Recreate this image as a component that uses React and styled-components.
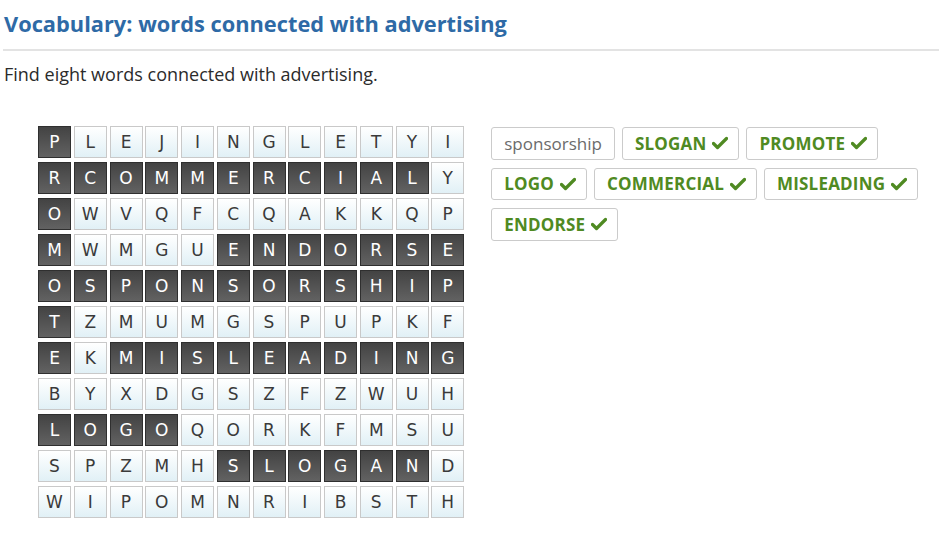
import styled, { createGlobalStyle } from "styled-components";

const Global = createGlobalStyle`
    body {
        margin: 0;
        background: #fff;
        font-family: "Open Sans", "Liberation Sans", sans-serif;
    }
`
const Page = styled.div`
    padding: 0 1px 0 3px;
`
const Titulo = styled.h2`
    color: #2e6aa6;
    font-size: 21.8px;
    font-weight: 700;
    margin: 0;
    padding: 9px 1px 11px;
    line-height: 29px;
    border-bottom: 2px solid #e3e3e3;
`
const Instrucao = styled.p`
    color: #2b2b2b;
    font-size: 18px;
    margin: 10px 0 0 1px;
    line-height: 26px;
`
const Area = styled.div`
    display: flex;
    align-items: flex-start;
    gap: 27px;
    margin-top: 39px;
    padding-left: 35px;
`
const Grade = styled.div`
    display: grid;
    grid-template-columns: repeat(12, 33px);
    grid-auto-rows: 32px;
    column-gap: 2.75px;
    row-gap: 4px;
`
const Celula = styled.div`
    box-sizing: border-box;
    display: flex;
    align-items: center;
    justify-content: center;
    font-family: "DejaVu Sans", "Open Sans", sans-serif;
    font-size: 17px;
    border: 1px solid ${p => p.$marcada ? "#2f2f2f" : "#c9c9c9"};
    background: ${p => p.$marcada
        ? "linear-gradient(#434343, #626262)"
        : "linear-gradient(#ffffff, #e1f0f6)"};
    color: ${p => p.$marcada ? "#fff" : "#3a3a3a"};
`
const Palavras = styled.div`
    display: flex;
    flex-wrap: wrap;
    gap: 8px 7px;
    width: 440px;
    padding-top: 1px;
`
const Etiqueta = styled.div`
    box-sizing: border-box;
    height: 32.5px;
    display: flex;
    align-items: center;
    gap: 6px;
    padding: 0 ${p => p.$achada ? "10px" : "12px"} 0 12px;
    border: 1px solid #cbcbcb;
    border-radius: 3px;
    font-size: 17px;
    font-weight: ${p => p.$achada ? 700 : 400};
    letter-spacing: ${p => p.$achada ? "0.2px" : "0"};
    color: ${p => p.$achada ? "#4f8a22" : "#6b6b6b"};
`

const Check = () => (
    <svg width="16" height="14" viewBox="0 0 16 14">
        <path d="M1.5 7.5 L5.5 11.5 L14.5 2.5" stroke="#4f8a22" strokeWidth="3.2" fill="none" strokeLinecap="round" strokeLinejoin="round" />
    </svg>
)

const linhas = [
    ["PLEJINGLETYI", [0]],
    ["RCOMMERCIALY", [0, 1, 2, 3, 4, 5, 6, 7, 8, 9, 10]],
    ["OWVQFCQAKKQP", [0]],
    ["MWMGUENDORSE", [0, 5, 6, 7, 8, 9, 10, 11]],
    ["OSPONSORSHIP", [0, 1, 2, 3, 4, 5, 6, 7, 8, 9, 10, 11]],
    ["TZMUMGSPUPKF", [0]],
    ["EKMISLEADING", [0, 2, 3, 4, 5, 6, 7, 8, 9, 10, 11]],
    ["BYXDGSZFZWUH", []],
    ["LOGOQORKFMSU", [0, 1, 2, 3]],
    ["SPZMHSLOGAND", [5, 6, 7, 8, 9, 10]],
    ["WIPOMNRIBSTH", []],
]

const palavras = [
    ["sponsorship", false],
    ["SLOGAN", true],
    ["PROMOTE", true],
    ["LOGO", true],
    ["COMMERCIAL", true],
    ["MISLEADING", true],
    ["ENDORSE", true],
]

export default function App() {
    return (
        <Page>
            <Global />
            <Titulo>Vocabulary: words connected with advertising</Titulo>
            <Instrucao>Find eight words connected with advertising.</Instrucao>
            <Area>
                <Grade>
                    {linhas.map(([letras, marcadas], r) =>
                        letras.split("").map((l, c) => (
                            <Celula key={r + "-" + c} $marcada={marcadas.includes(c)}>{l}</Celula>
                        ))
                    )}
                </Grade>
                <Palavras>
                    {palavras.map(([p, achada]) => (
                        <Etiqueta key={p} $achada={achada}>
                            {p}
                            {achada && <Check />}
                        </Etiqueta>
                    ))}
                </Palavras>
            </Area>
        </Page>
    )
}
